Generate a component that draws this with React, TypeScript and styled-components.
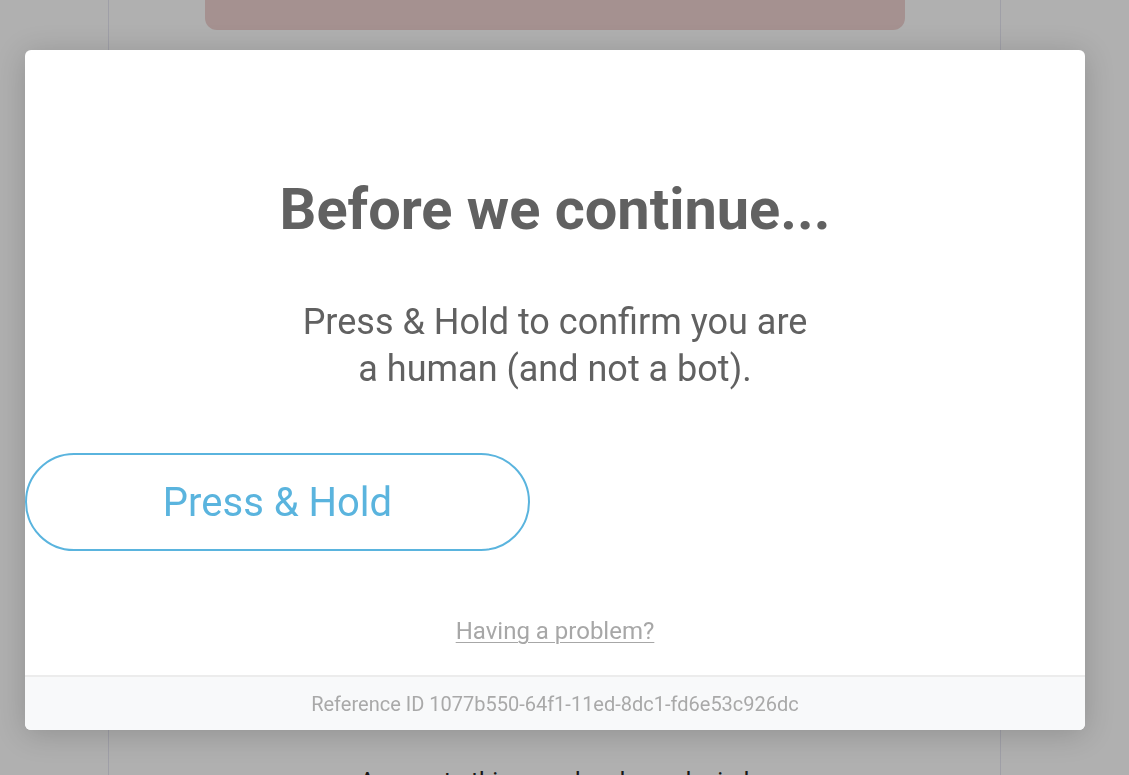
import styled, { createGlobalStyle } from 'styled-components';

const GlobalStyle = createGlobalStyle`
  html, body {
    margin: 0;
    padding: 0;
    background: #ffffff;
    overflow: hidden;
  }
  body {
    font-family: Roboto, 'Helvetica Neue', Arial, sans-serif;
  }
`;

const Page = styled.div`
  width: 893px;
  min-height: 100vh;
  margin-left: 108px;
  border-left: 1px solid #e6e6f2;
  border-right: 1px solid #e6e6f2;
  box-sizing: border-box;
  display: flex;
  flex-direction: column;
`;

const Alert = styled.div`
  margin: -34px 0 0 96px;
  width: 700px;
  height: 64px;
  box-sizing: border-box;
  padding: 1px 0 0 38px;
  background: #f0d3d1;
  border-radius: 0 0 12px 12px;
  display: flex;
  align-items: flex-start;
  gap: 12px;
  color: #1c1c1c;
  font-size: 26px;
  line-height: 30px;

  .dot {
    width: 8px;
    height: 3px;
    margin-top: -1px;
    background: #e0542f;
    border-radius: 0 0 4px 4px;
  }
`;

const PageText = styled.p`
  margin: 736px 0 0;
  text-align: center;
  font-size: 24px;
  line-height: 30px;
  color: #222;
`;

const Overlay = styled.div`
  position: fixed;
  inset: 0;
  background: rgba(0, 0, 0, 0.31);
`;

const Modal = styled.div`
  position: fixed;
  left: 25px;
  top: 50px;
  width: 1060px;
  height: 680px;
  background: #ffffff;
  border-radius: 6px;
  box-shadow: 0 4px 30px rgba(0, 0, 0, 0.18);
  display: flex;
  flex-direction: column;
  overflow: hidden;
`;

const Body = styled.div`
  flex: 1;
  display: flex;
  flex-direction: column;
  align-items: center;
  padding-top: 124px;
  color: #616161;
`;

const Title = styled.h1`
  margin: 0;
  font-size: 57.7px;
  line-height: 70px;
  font-weight: 700;
  letter-spacing: 0;
`;

const Lead = styled.p`
  margin: 55px 0 0;
  font-size: 36px;
  line-height: 47px;
  font-weight: 400;
  text-align: center;
`;

const HoldButton = styled.button`
  align-self: flex-start;
  margin-top: 60px;
  width: 505px;
  height: 98px;
  border: 2px solid #5ab4de;
  border-radius: 49px;
  background: #ffffff;
  color: #5ab4de;
  font-family: Roboto, 'Helvetica Neue', Arial, sans-serif;
  font-size: 40px;
  font-weight: 400;
  cursor: pointer;
`;

const ProblemLink = styled.a`
  margin-top: 66px;
  font-size: 24px;
  line-height: 29px;
  color: #a7a7a7;
  text-decoration: underline;
  text-underline-offset: 3px;
  text-decoration-thickness: 1px;
`;

const Footer = styled.div`
  height: 55px;
  box-sizing: border-box;
  border-top: 2px solid #ececec;
  background: #f8f9fa;
  display: flex;
  align-items: center;
  justify-content: center;
  font-size: 20px;
  color: #a9a9a9;
`;

export default function App() {
  return (
    <>
      <GlobalStyle />
      <Page>
        <Alert>
          <span className="dot" />
          <span>Please verify you are a human by pressing the button</span>
        </Alert>
        <PageText>Access to this page has been denied</PageText>
      </Page>
      <Overlay />
      <Modal>
        <Body>
          <Title>Before we continue...</Title>
          <Lead>
            Press &amp; Hold to confirm you are
            <br />
            a human (and not a bot).
          </Lead>
          <HoldButton>Press &amp; Hold</HoldButton>
          <ProblemLink href="#">Having a problem?</ProblemLink>
        </Body>
        <Footer>Reference ID 1077b550-64f1-11ed-8dc1-fd6e53c926dc</Footer>
      </Modal>
    </>
  );
}
